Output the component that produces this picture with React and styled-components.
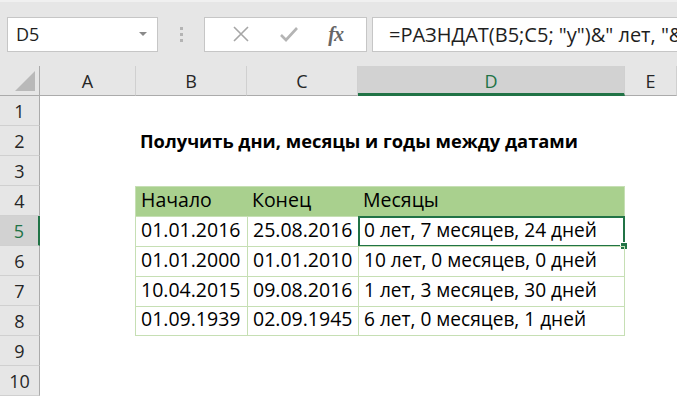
import React from 'react';
import styled, { createGlobalStyle } from 'styled-components';

const GlobalStyle = createGlobalStyle`
  body {
    margin: 0;
    background: #ffffff;
    overflow: hidden;
    font-family: 'Open Sans', 'Noto Sans', sans-serif;
  }
`;

const Window = styled.div`
  width: 677px;
  height: 396px;
  overflow: hidden;
  background: #ffffff;
`;

const Toolbar = styled.div`
  display: flex;
  align-items: center;
  height: 66px;
  padding-left: 7px;
  background: #e6e6e6;
  border-top: 2px solid #f0f0f0;
  box-sizing: border-box;
`;

const Field = styled.div`
  display: flex;
  align-items: center;
  height: 35px;
  box-sizing: border-box;
  background: #ffffff;
  border: 1px solid #c6c6c6;
  color: #1e1e1e;
  font-size: 18px;
`;

const NameBox = styled(Field)`
  width: 151px;
  justify-content: space-between;
  padding: 0 10px 0 8px;
`;

const Caret = styled.span`
  width: 0;
  height: 0;
  border-left: 4px solid transparent;
  border-right: 4px solid transparent;
  border-top: 4px solid #8a8a8a;
`;

const Grip = styled.div`
  display: flex;
  flex-direction: column;
  gap: 3px;
  width: 46px;
  align-items: center;
`;

const GripDot = styled.span`
  width: 3px;
  height: 3px;
  background: #b4b4b4;
`;

const ButtonBox = styled(Field)`
  width: 163px;
  justify-content: space-around;
  padding: 0 8px 0 12px;
`;

const FxLabel = styled.span`
  font-family: 'Liberation Serif', serif;
  font-style: italic;
  font-weight: 700;
  font-size: 20px;
  color: #666666;
  letter-spacing: -1px;
`;

const FormulaBar = styled(Field)`
  flex: 1;
  margin-left: 5px;
  padding-left: 16px;
  border-right: none;
  white-space: nowrap;
  overflow: hidden;
  font-size: 20px;
`;

const Sheet = styled.div`
  display: grid;
  grid-template-columns: 40px 96px 111px 111px 267px 1fr;
  grid-auto-rows: 30px;
`;

const ColHead = styled.div`
  display: flex;
  align-items: center;
  justify-content: center;
  box-sizing: border-box;
  background: ${({ $active }) => ($active ? '#d2d2d2' : '#e6e6e6')};
  color: ${({ $active }) => ($active ? '#217346' : '#262626')};
  border-right: 1px solid #d0d0d0;
  border-bottom: ${({ $active }) => ($active ? '3px solid #217346' : '1px solid #ababab')};
  font-size: 18px;
  padding-top: ${({ $active }) => ($active ? '2px' : '0')};
`;

const Corner = styled(ColHead)`
  position: relative;
  border-right: 1px solid #ababab;

  &::after {
    content: '';
    position: absolute;
    right: 4px;
    bottom: 4px;
    width: 0;
    height: 0;
    border-left: 20px solid transparent;
    border-bottom: 20px solid #b9b9b9;
  }
`;

const RowHead = styled.div`
  display: flex;
  align-items: center;
  justify-content: center;
  box-sizing: border-box;
  background: ${({ $active }) => ($active ? '#d2d2d2' : '#e6e6e6')};
  color: ${({ $active }) => ($active ? '#217346' : '#262626')};
  border-bottom: 1px solid #d0d0d0;
  border-right: ${({ $active }) => ($active ? '2px solid #217346' : '1px solid #ababab')};
  font-size: 18px;
`;

const Cell = styled.div`
  position: relative;
  display: flex;
  align-items: flex-end;
  box-sizing: border-box;
  padding: 0 0 3px 5px;
  white-space: nowrap;
  font-size: ${({ $size }) => $size || '19.5px'};
  color: #000000;
  background: ${({ $head }) => ($head ? '#a9d08e' : 'transparent')};
  border-top: ${({ $table }) => ($table ? '1px solid #c6dfb4' : 'none')};
  border-left: ${({ $table, $head, $first }) => ($table && (!$head || $first) ? '1px solid #c6dfb4' : 'none')};
  border-right: ${({ $table, $last }) => ($table && $last ? '1px solid #c6dfb4' : 'none')};
  border-bottom: ${({ $table, $bottom }) => ($table && $bottom ? '1px solid #c6dfb4' : 'none')};
  margin-left: ${({ $first }) => ($first ? '-1px' : '0')};
`;

const Title = styled(Cell)`
  grid-column: 3 / 7;
  font-weight: 700;
  font-size: 18.3px;
  padding-left: 4px;
`;

const Selection = styled.span`
  position: absolute;
  left: -1px;
  top: -1px;
  right: -1px;
  bottom: -1px;
  border: 2px solid #217346;
  pointer-events: none;

  &::after {
    content: '';
    position: absolute;
    right: -5px;
    bottom: -5px;
    width: 6px;
    height: 6px;
    background: #217346;
    border: 1px solid #ffffff;
  }
`;

const columns = ['A', 'B', 'C', 'D', 'E'];

const dataRows = [
  ['01.01.2016', '25.08.2016', '0 лет, 7 месяцев, 24 дней'],
  ['01.01.2000', '01.01.2010', '10 лет, 0 месяцев, 0 дней'],
  ['10.04.2015', '09.08.2016', '1 лет, 3 месяцев, 30 дней'],
  ['01.09.1939', '02.09.1945', '6 лет, 0 месяцев, 1 дней'],
];

const XIcon = () => (
  <svg width="18" height="18" viewBox="0 0 18 18">
    <path d="M2 2 L16 16 M16 2 L2 16" stroke="#a6a6a6" strokeWidth="1.6" fill="none" />
  </svg>
);

const CheckIcon = () => (
  <svg width="18" height="16" viewBox="0 0 18 16">
    <path d="M1 9 L6 14 L17 2" stroke="#b4b4b4" strokeWidth="2.6" fill="none" />
  </svg>
);

const EmptyRow = ({ n }) => (
  <>
    <RowHead>{n}</RowHead>
    <Cell />
    <Cell />
    <Cell />
    <Cell />
    <Cell />
  </>
);

const App = () => (
  <Window>
    <GlobalStyle />
    <Toolbar>
      <NameBox>
        D5
        <Caret />
      </NameBox>
      <Grip>
        <GripDot />
        <GripDot />
        <GripDot />
      </Grip>
      <ButtonBox>
        <XIcon />
        <CheckIcon />
        <FxLabel>fx</FxLabel>
      </ButtonBox>
      <FormulaBar>=РАЗНДАТ(B5;C5; "y")&amp;" лет, "&amp;</FormulaBar>
    </Toolbar>
    <Sheet>
      <Corner />
      {columns.map((c) => (
        <ColHead key={c} $active={c === 'D'}>
          {c}
        </ColHead>
      ))}

      <EmptyRow n={1} />

      <RowHead>2</RowHead>
      <Cell />
      <Title>Получить дни, месяцы и годы между датами</Title>

      <EmptyRow n={3} />

      <RowHead>4</RowHead>
      <Cell />
      <Cell $table $head $first>Начало</Cell>
      <Cell $table $head>Конец</Cell>
      <Cell $table $head $last>Месяцы</Cell>
      <Cell />

      {dataRows.map((row, i) => (
        <React.Fragment key={row[0]}>
          <RowHead $active={i === 0}>{i + 5}</RowHead>
          <Cell />
          <Cell $table $first $bottom={i === dataRows.length - 1}>
            {row[0]}
          </Cell>
          <Cell $table $bottom={i === dataRows.length - 1}>
            {row[1]}
          </Cell>
          <Cell $table $last $size="19.1px" $bottom={i === dataRows.length - 1}>
            {row[2]}
            {i === 0 && <Selection />}
          </Cell>
          <Cell />
        </React.Fragment>
      ))}

      <EmptyRow n={9} />
      <EmptyRow n={10} />
    </Sheet>
  </Window>
);

export default App;
